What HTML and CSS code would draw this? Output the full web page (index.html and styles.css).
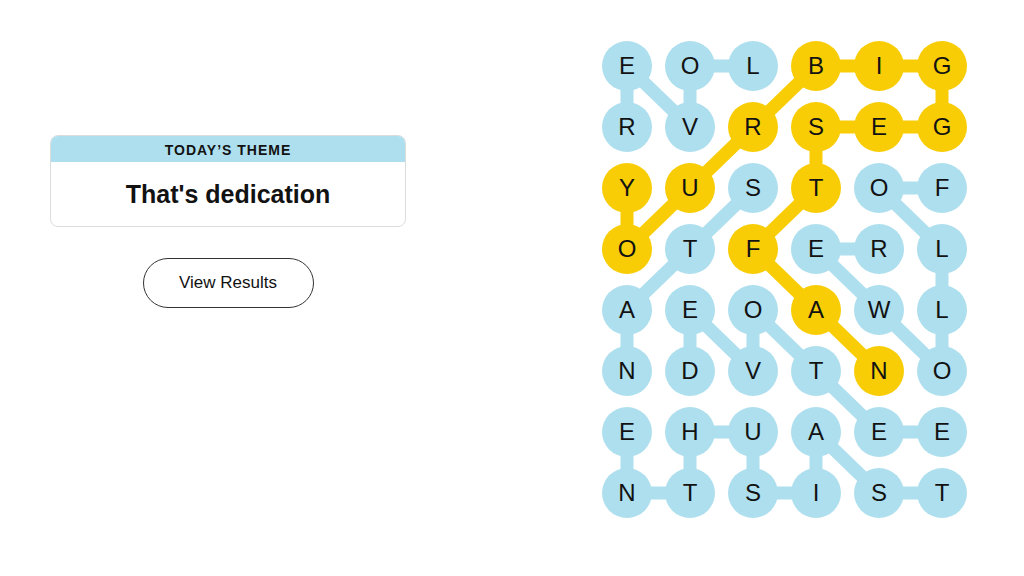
FILE: index.html
```html
<!DOCTYPE html>
<html lang="en">
<head>
    <meta charset="UTF-8">
    <meta name="viewport" content="width=device-width, initial-scale=1.0">
    <title>Strands</title>
    <link rel="stylesheet" href="styles.css">
</head>
<body>
    <div class="page">
        <div class="sidebar">
            <div class="theme-card">
                <div class="theme-label">TODAY’S THEME</div>
                <div class="theme-title">That's dedication</div>
            </div>
            <button class="results-btn">View Results</button>
        </div>

        <div class="board">
            <svg class="paths" width="365" height="477" viewBox="0 0 365 477">
                <!-- spangram -->
                <polyline class="path-found" points="25,147 25,208 88,147 151,86 214,25 277,25 340,25 340,86 277,86 214,86 214,147 151,208 214,269 277,330"/>
                <!-- theme words -->
                <polyline class="path-word" points="151,25 88,25 88,86 25,25 25,86"/>
                <polyline class="path-word" points="151,147 88,208 25,269 25,330"/>
                <polyline class="path-word" points="340,147 277,147 340,208 340,269 340,330 277,269 214,208 277,208"/>
                <polyline class="path-word" points="88,330 88,269 151,330 151,269 214,330 277,391 340,391"/>
                <polyline class="path-word" points="25,391 25,452 88,452 88,391 151,391 151,452 214,452 214,391 277,452 340,452"/>
            </svg>
            <div class="cells">
                <div class="cell">E</div>
                <div class="cell">O</div>
                <div class="cell">L</div>
                <div class="cell found">B</div>
                <div class="cell found">I</div>
                <div class="cell found">G</div>

                <div class="cell">R</div>
                <div class="cell">V</div>
                <div class="cell found">R</div>
                <div class="cell found">S</div>
                <div class="cell found">E</div>
                <div class="cell found">G</div>

                <div class="cell found">Y</div>
                <div class="cell found">U</div>
                <div class="cell">S</div>
                <div class="cell found">T</div>
                <div class="cell">O</div>
                <div class="cell">F</div>

                <div class="cell found">O</div>
                <div class="cell">T</div>
                <div class="cell found">F</div>
                <div class="cell">E</div>
                <div class="cell">R</div>
                <div class="cell">L</div>

                <div class="cell">A</div>
                <div class="cell">E</div>
                <div class="cell">O</div>
                <div class="cell found">A</div>
                <div class="cell">W</div>
                <div class="cell">L</div>

                <div class="cell">N</div>
                <div class="cell">D</div>
                <div class="cell">V</div>
                <div class="cell">T</div>
                <div class="cell found">N</div>
                <div class="cell">O</div>

                <div class="cell">E</div>
                <div class="cell">H</div>
                <div class="cell">U</div>
                <div class="cell">A</div>
                <div class="cell">E</div>
                <div class="cell">E</div>

                <div class="cell">N</div>
                <div class="cell">T</div>
                <div class="cell">S</div>
                <div class="cell">I</div>
                <div class="cell">S</div>
                <div class="cell">T</div>
            </div>
        </div>
    </div>
</body>
</html>
```

FILE: styles.css
```css
body {
    margin: 0;
    font-family: "Liberation Sans", Arial, sans-serif;
    background-color: #fff;
    color: #121212;
}
.page {
    display: flex;
    align-items: flex-start;
    width: 1024px;
    height: 576px;
}
.sidebar {
    width: 356px;
    margin-left: 50px;
    margin-top: 135px;
    display: flex;
    flex-direction: column;
    align-items: center;
    gap: 31px;
}
.theme-card {
    width: 100%;
    box-sizing: border-box;
    border: 1px solid #dcdcdc;
    border-radius: 8px;
    overflow: hidden;
}
.theme-label {
    background-color: #aedfee;
    height: 26px;
    line-height: 28px;
    text-align: center;
    font-size: 14px;
    font-weight: bold;
    letter-spacing: 1px;
}
.theme-title {
    height: 64px;
    line-height: 64px;
    text-align: center;
    font-size: 25px;
    font-weight: bold;
}
.results-btn {
    width: 171px;
    height: 50px;
    border: 1px solid #333;
    border-radius: 25px;
    background-color: #fff;
    color: #121212;
    font-family: inherit;
    font-size: 17px;
    cursor: pointer;
}
.board {
    position: relative;
    margin-left: 196px;
    margin-top: 41px;
    width: 365px;
    height: 477px;
}
.paths {
    position: absolute;
    top: 0;
    left: 0;
}
.path-found,
.path-word {
    fill: none;
    stroke-width: 13;
    stroke-linejoin: round;
}
.path-found {
    stroke: #f8cd05;
}
.path-word {
    stroke: #aedfee;
}
.cells {
    position: relative;
    display: grid;
    grid-template-columns: repeat(6, 50px);
    grid-auto-rows: 50px;
    column-gap: 13px;
    row-gap: 11px;
}
.cell {
    display: flex;
    align-items: center;
    justify-content: center;
    border-radius: 50%;
    background-color: #aedfee;
    font-size: 24px;
}
.cell.found {
    background-color: #f8cd05;
}
```
